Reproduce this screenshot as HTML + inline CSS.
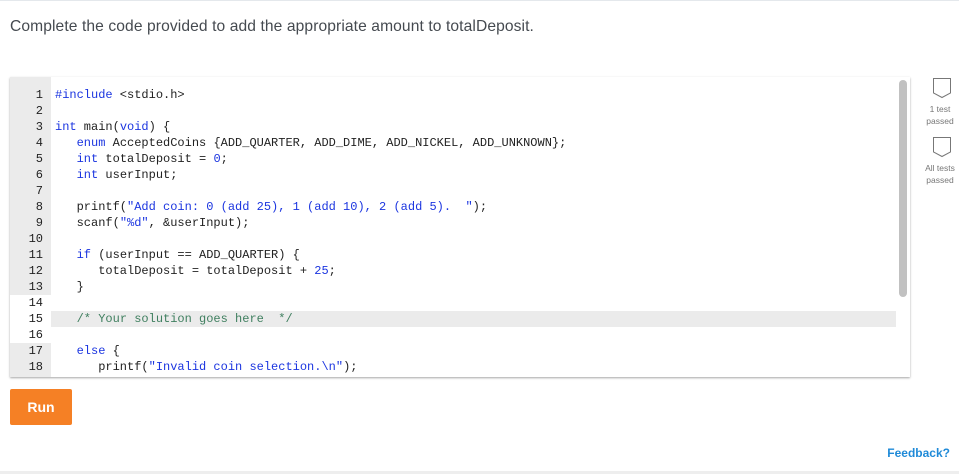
<!DOCTYPE html>
<html><head><style>
*{margin:0;padding:0;box-sizing:border-box}
body{width:959px;height:474px;background:#fff;position:relative;overflow:hidden;font-family:"Liberation Sans",sans-serif}
.top{position:absolute;left:0;top:0;width:959px;height:1px;background:#e4e8ec}
.title{position:absolute;left:10px;top:18px;font-size:15.6px;color:#454a50;white-space:nowrap;letter-spacing:0.1px}
.ed{position:absolute;left:10px;top:77px;width:900px;height:300px;background:#fff;box-shadow:0 1px 2px rgba(0,0,0,.35);overflow:hidden}
.gut{position:absolute;left:0;top:0;width:41px;height:300px;background:#ebebeb}
.ln{position:absolute;left:0;width:41px;height:16px;text-align:right;padding-right:8px;font:12px/16px "Liberation Mono",monospace;color:#222}
.code{position:absolute;left:45px;top:10px;font:12px/16px "Liberation Mono",monospace;color:#222;white-space:pre}
.hl{position:absolute;left:41px;top:234px;width:845px;height:16px;background:#ebebeb}
.k{color:#1b35e0}.s{color:#1b35e0}.c{color:#3f7f5f}.n{color:#1b35e0}
.sb{position:absolute;left:889px;top:3px;width:8px;height:217px;background:#c1c1c1;border-radius:4px}
.run{position:absolute;left:10px;top:389px;width:62px;height:36px;background:#f58025;border-radius:2px;color:#fff;font-weight:bold;font-size:14px;text-align:center;line-height:36px}
.fb{position:absolute;right:9px;top:446px;color:#1f8ad8;font-weight:bold;font-size:12px}
.bot{position:absolute;left:0;top:471px;width:959px;height:3px;background:#eee}
.tst{position:absolute;left:920px;width:40px;text-align:center;font-size:8.5px;color:#777;line-height:12px}
</style></head><body>
<div class="top"></div>
<div class="title">Complete the code provided to add the appropriate amount to totalDeposit.</div>
<div class="ed">
<div class="gut"></div>
<div class="ln" style="top:10px">1</div><div class="ln" style="top:26px">2</div><div class="ln" style="top:42px">3</div><div class="ln" style="top:58px">4</div><div class="ln" style="top:74px">5</div><div class="ln" style="top:90px">6</div><div class="ln" style="top:106px">7</div><div class="ln" style="top:122px">8</div><div class="ln" style="top:138px">9</div><div class="ln" style="top:154px">10</div><div class="ln" style="top:170px">11</div><div class="ln" style="top:186px">12</div><div class="ln" style="top:202px">13</div><div class="ln" style="top:218px;background:#fff">14</div><div class="ln" style="top:234px;background:#fff">15</div><div class="ln" style="top:250px;background:#fff">16</div><div class="ln" style="top:266px">17</div><div class="ln" style="top:282px">18</div>
<div class="hl"></div>
<div class="code"><span class="k">#include</span> &lt;stdio.h&gt;

<span class="k">int</span> main(<span class="k">void</span>) {
   <span class="k">enum</span> AcceptedCoins {ADD_QUARTER, ADD_DIME, ADD_NICKEL, ADD_UNKNOWN};
   <span class="k">int</span> totalDeposit = <span class="n">0</span>;
   <span class="k">int</span> userInput;

   printf(<span class="s">"Add coin: 0 (add 25), 1 (add 10), 2 (add 5).  "</span>);
   scanf(<span class="s">"%d"</span>, &amp;userInput);

   <span class="k">if</span> (userInput == ADD_QUARTER) {
      totalDeposit = totalDeposit + <span class="n">25</span>;
   }

   <span class="c">/* Your solution goes here  */</span>

   <span class="k">else</span> {
      printf(<span class="s">"Invalid coin selection.\n"</span>);</div>
<div class="sb"></div>
</div>
<svg style="position:absolute;left:932px;top:77px" width="20" height="22"><path d="M1.5 1.5H18.5V16L10 20.5L1.5 16Z" fill="none" stroke="#777" stroke-width="1"/></svg>
<div class="tst" style="top:103px">1 test<br>passed</div>
<svg style="position:absolute;left:932px;top:136px" width="20" height="22"><path d="M1.5 1.5H18.5V16L10 20.5L1.5 16Z" fill="none" stroke="#777" stroke-width="1"/></svg>
<div class="tst" style="top:162px">All tests<br>passed</div>
<div class="run">Run</div>
<div class="fb">Feedback?</div>
<div class="bot"></div>
</body></html>
